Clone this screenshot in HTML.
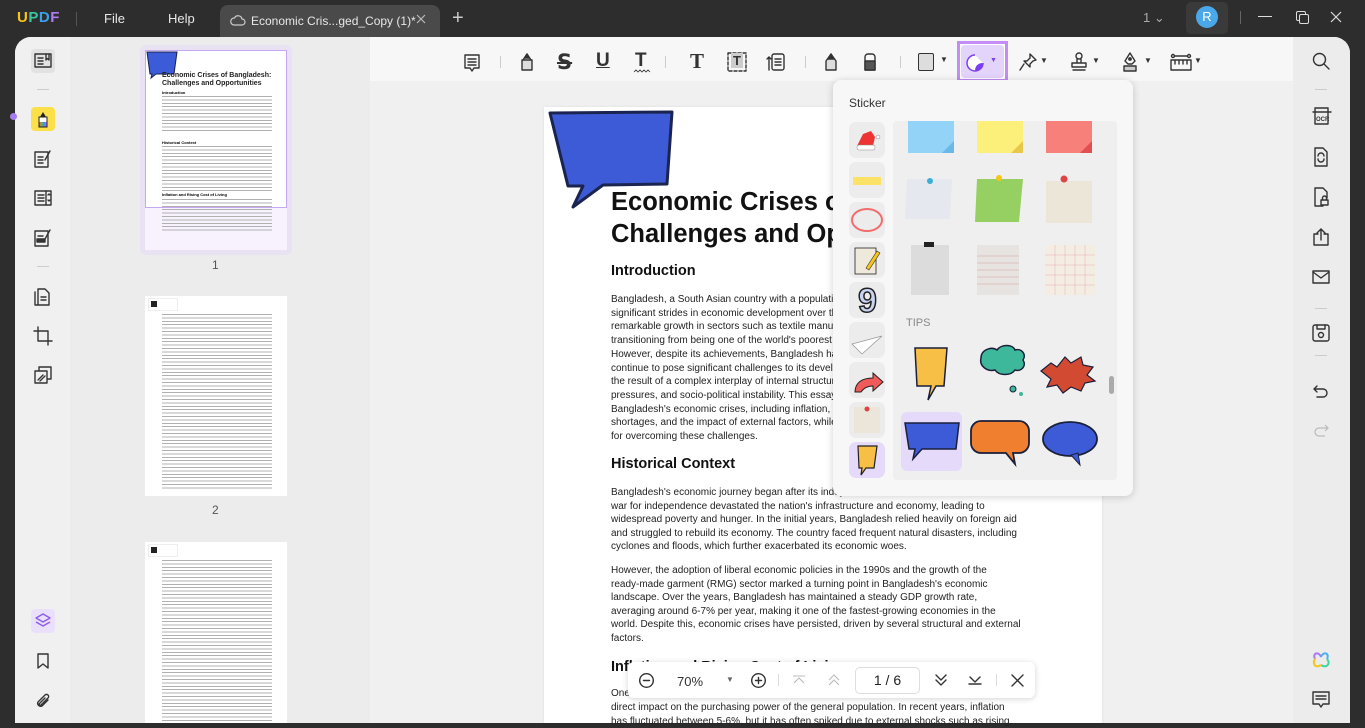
<!DOCTYPE html>
<html><head><meta charset="utf-8">
<style>
*{margin:0;padding:0;box-sizing:border-box}
body{width:1365px;height:723px;overflow:hidden;background:#2d2d2d;font-family:"Liberation Sans",Arial,sans-serif;position:relative}
.abs{position:absolute}
.title{color:#e8e8e8;font-size:13px}
svg{position:absolute;overflow:visible}
.ic{stroke:#333;fill:none;stroke-width:1.4;stroke-linecap:round;stroke-linejoin:round}
.pg{position:absolute;background:#fff}
.line{white-space:nowrap;font-size:10px;color:#222;position:absolute;left:611px;line-height:12px}
.h{position:absolute;left:611px;font-weight:bold;color:#111;white-space:nowrap}
.sb{position:absolute;left:849px;width:36px;height:36px;border-radius:7px;background:#ececec}
.tl{position:absolute;background:repeating-linear-gradient(#b0b0b0 0 1px,transparent 1px 3.4px)}
</style></head><body>
<!-- title bar -->
<div class="abs" style="left:17px;top:9px;font-weight:bold;font-size:15px;letter-spacing:.5px"><span style="color:#f5c518">U</span><span style="color:#3cc6a0">P</span><span style="color:#3aa0f0">D</span><span style="color:#b07cf0">F</span></div>
<div class="abs" style="left:76px;top:12px;width:1px;height:14px;background:#555"></div>
<div class="abs title" style="left:104px;top:11px">File</div>
<div class="abs title" style="left:168px;top:11px">Help</div>
<div class="abs" style="left:220px;top:5px;width:220px;height:32px;background:#4a4a4a;border-radius:8px 8px 0 0"></div>
<svg style="left:231px;top:14px" width="14" height="12"><path d="M3 11h8a3 3 0 0 0 0-6 4 4 0 0 0-7.5-1A3.5 3.5 0 0 0 3 11z" stroke="#ccc" fill="none" stroke-width="1.2"/></svg>
<div class="abs title" style="left:251px;top:14px;font-size:12px">Economic Cris...ged_Copy (1)*</div>
<svg style="left:416px;top:14px" width="10" height="10"><path d="M1 1l8 8M9 1L1 9" stroke="#bbb" stroke-width="1.2"/></svg>
<div class="abs title" style="left:452px;top:7px;font-size:20px;color:#ccc">+</div>
<div class="abs title" style="left:1143px;top:10px;color:#aaa">1 ⌄</div>
<div class="abs" style="left:1186px;top:2px;width:42px;height:32px;background:#3a3a3a;border-radius:5px"></div>
<div class="abs" style="left:1196px;top:6px;width:22px;height:22px;border-radius:50%;background:#4aa8e8;color:#fff;font-size:13px;text-align:center;line-height:22px">R</div>
<div class="abs" style="left:1240px;top:11px;width:1px;height:13px;background:#666"></div>
<div class="abs" style="left:1258px;top:16px;width:14px;height:1px;background:#ddd"></div>
<div class="abs" style="left:1296px;top:11px;width:10px;height:10px;border:1.2px solid #ddd;border-radius:2px"></div>
<div class="abs" style="left:1299px;top:14px;width:10px;height:10px;border:1.2px solid #ddd;border-radius:2px;background:#2d2d2d"></div>
<svg style="left:1330px;top:11px" width="12" height="12"><path d="M1 1l10 10M11 1L1 11" stroke="#ddd" stroke-width="1.2"/></svg>

<!-- app -->
<div class="abs" style="left:15px;top:37px;width:1335px;height:686px;background:#f7f7f7;border-radius:16px 16px 0 0;overflow:hidden">
  <div class="abs" style="left:0;top:0;width:55px;height:686px;background:#f0f0f0"></div>
  <div class="abs" style="left:55px;top:0;width:300px;height:686px;background:#ececec"></div>
  <div class="abs" style="left:355px;top:44px;width:923px;height:642px;background:#f0f0f0"></div>
  <div class="abs" style="left:1278px;top:0;width:57px;height:686px;background:#ececec"></div>
</div>
<div class="abs" style="left:10px;top:113px;width:7px;height:7px;border-radius:50%;background:#a77cf0"></div>

<!-- left sidebar icons -->
<div class="abs" style="left:31px;top:49px;width:24px;height:24px;border-radius:4px;background:#e2e2e2"></div>
<svg style="left:34px;top:52px" width="18" height="18" class="ic"><rect x="1" y="2" width="16" height="13"/><path d="M4 6h5M4 9h5M4 12h5M12 2v6l1.5-1.5L15 8V2"/></svg>
<div class="abs" style="left:37px;top:89px;width:12px;height:1px;background:#ccc"></div>
<div class="abs" style="left:31px;top:107px;width:24px;height:24px;border-radius:4px;background:#fbe04a"></div>
<svg style="left:35px;top:110px" width="16" height="18"><path d="M5 7l3-5 3 5z" fill="#222"/><rect x="4" y="7" width="8" height="10" fill="#fff" stroke="#222"/><rect x="4.5" y="12" width="7" height="4.5" fill="url(#rb)"/><defs><linearGradient id="rb"><stop offset="0" stop-color="#f55"/><stop offset=".33" stop-color="#4c4"/><stop offset=".66" stop-color="#48f"/><stop offset="1" stop-color="#c6f"/></linearGradient></defs></svg>
<svg style="left:34px;top:150px" width="18" height="18" class="ic"><rect x="1" y="2" width="13" height="15"/><path d="M4 7h5M4 10h5M4 13h5M16 1l-5 9"/></svg>
<svg style="left:34px;top:189px" width="18" height="18" class="ic"><rect x="1" y="2" width="16" height="14"/><path d="M4 6h6M4 9h6M4 12h6M12 2v14M14 6l1-1 1 1M14 11l1 1 1-1"/></svg>
<svg style="left:34px;top:229px" width="18" height="18" class="ic"><rect x="1" y="2" width="13" height="15"/><path d="M4 7h5M16 1l-5 9"/><rect x="3" y="10" width="8" height="3" fill="#333"/></svg>
<div class="abs" style="left:37px;top:266px;width:12px;height:1px;background:#ccc"></div>
<svg style="left:34px;top:288px" width="18" height="18" class="ic"><path d="M4 1h7l4 4v12H4zM1 4v13h3"/><path d="M7 9h5M7 12h5"/></svg>
<svg style="left:34px;top:327px" width="18" height="18" class="ic"><path d="M4 0v14h14M0 4h14v14"/></svg>
<svg style="left:34px;top:366px" width="18" height="18" class="ic"><rect x="5" y="1" width="12" height="12"/><rect x="1" y="5" width="12" height="12" fill="#f0f0f0"/><path d="M4 14l5-5M6 15l5-5"/></svg>
<div class="abs" style="left:31px;top:609px;width:24px;height:24px;border-radius:4px;background:#ebe0fb"></div>
<svg style="left:34px;top:612px" width="18" height="18" fill="none" stroke="#8a5cf0" stroke-width="1.4" stroke-linejoin="round"><path d="M9 2l7 4-7 4-7-4zM2 10l7 4 7-4"/></svg>
<svg style="left:36px;top:653px" width="14" height="16" class="ic"><path d="M2 1h10v14l-5-4-5 4z"/></svg>
<svg style="left:35px;top:692px" width="16" height="18" class="ic"><path d="M13 8l-6 6a3 3 0 0 1-4-4l7-7a2 2 0 0 1 3 3l-7 7a1 1 0 0 1-1.5-1.5L10 6"/></svg>

<!-- thumbnails -->
<div class="abs" style="left:140px;top:45px;width:152px;height:210px;background:#e8e2f3;border-radius:6px"></div>
<div class="pg" style="left:145px;top:50px;width:142px;height:200px;background:#f7f2fe"></div>
<div class="pg" style="left:145px;top:50px;width:142px;height:158px;border:1px solid #c7a8f5"></div>
<svg style="left:146px;top:51px" width="34" height="26"><path d="M1 1h30l-3 22H10l-5 4 1-4H4z" fill="#3b5bd8" stroke="#1a2050" stroke-width="1"/></svg>
<div class="abs" style="left:162px;top:72px;font-size:7px;font-weight:bold;color:#222;line-height:8px">Economic Crises of Bangladesh:<br>Challenges and Opportunities</div>
<div class="abs" style="left:162px;top:90px;font-size:4px;font-weight:bold">Introduction</div>
<div class="tl" style="left:162px;top:96px;width:110px;height:37px"></div>
<div class="abs" style="left:162px;top:140px;font-size:4px;font-weight:bold">Historical Context</div>
<div class="tl" style="left:162px;top:146px;width:110px;height:45px"></div>
<div class="abs" style="left:162px;top:192px;font-size:4px;font-weight:bold">Inflation and Rising Cost of Living</div>
<div class="tl" style="left:162px;top:199px;width:110px;height:32px"></div>
<div class="abs" style="left:212px;top:258px;font-size:12px;color:#555">1</div>
<div class="pg" style="left:145px;top:296px;width:142px;height:200px"></div>
<div class="abs" style="left:148px;top:298px;width:30px;height:13px;border:1px solid #eee"></div>
<div class="abs" style="left:151px;top:301px;width:6px;height:6px;background:#222"></div>
<div class="tl" style="left:162px;top:314px;width:110px;height:175px"></div>
<div class="abs" style="left:212px;top:503px;font-size:12px;color:#555">2</div>
<div class="pg" style="left:145px;top:542px;width:142px;height:181px"></div>
<div class="abs" style="left:148px;top:544px;width:30px;height:13px;border:1px solid #eee"></div>
<div class="abs" style="left:151px;top:547px;width:6px;height:6px;background:#222"></div>
<div class="tl" style="left:162px;top:560px;width:110px;height:163px"></div>

<!-- toolbar -->
<svg style="left:463px;top:53px" width="18" height="20" class="ic"><path d="M2 2h14v13h-5l-2 3-2-3H2z"/><path d="M5 6h8M5 9h8M5 12h8"/></svg>
<div class="abs" style="left:500px;top:56px;width:1px;height:12px;background:#ccc"></div>
<svg style="left:519px;top:52px" width="16" height="20" class="ic"><path d="M4 8l4-6 4 6"/><path d="M3 8h10v10H3z" fill="#ddd"/><path d="M5.5 6L8 2l2.5 4z" fill="#333"/></svg>
<div class="abs" style="left:557px;top:50px;font-size:21px;font-weight:bold;color:#333;text-decoration:line-through;font-family:'DejaVu Sans',sans-serif">S</div>
<div class="abs" style="left:596px;top:50px;font-size:19px;font-weight:bold;color:#333;text-decoration:underline">U</div>
<div class="abs" style="left:635px;top:50px;font-size:19px;font-weight:bold;color:#333">T</div>
<svg style="left:634px;top:70px" width="16" height="3"><path d="M0 2l2-2 2 2 2-2 2 2 2-2 2 2 2-2 2 2" stroke="#333" fill="none" stroke-width=".8"/></svg>
<div class="abs" style="left:665px;top:56px;width:1px;height:12px;background:#ccc"></div>
<div class="abs" style="left:690px;top:49px;font-size:21px;font-weight:bold;color:#333;font-family:'Liberation Serif',serif">T</div>
<svg style="left:727px;top:52px" width="20" height="20" class="ic" stroke-dasharray="3 2"><rect x="1" y="1" width="18" height="18"/></svg>
<div class="abs" style="left:731px;top:53px;width:12px;height:15px;background:#ccc;font-size:13px;font-weight:bold;text-align:center;color:#333;line-height:15px">T</div>
<svg style="left:766px;top:52px" width="20" height="20" class="ic"><rect x="6" y="2" width="12" height="16" rx="2"/><path d="M9 7h6M9 10h6M9 13h6M3 18V5M1 7l2-2 2 2"/></svg>
<div class="abs" style="left:805px;top:56px;width:1px;height:12px;background:#ccc"></div>
<svg style="left:823px;top:52px" width="16" height="20" class="ic"><path d="M3 18V9l5-7 5 7v9z" fill="#ddd"/><path d="M5 7l3-5 3 5z" fill="#333"/></svg>
<svg style="left:862px;top:52px" width="16" height="20" class="ic"><path d="M3 18V5a3 3 0 0 1 3-3h4a3 3 0 0 1 3 3v13z"/><path d="M3 9h10v9H3z" fill="#555"/></svg>
<div class="abs" style="left:900px;top:56px;width:1px;height:12px;background:#ccc"></div>
<div class="abs" style="left:918px;top:53px;width:16px;height:18px;border:1.4px solid #333;border-radius:2px;background:#ddd"></div>
<div class="abs" style="left:940px;top:55px;font-size:8px;color:#333">▼</div>
<div class="abs" style="left:957px;top:41px;width:51px;height:41px;border:3px solid #c38cf7;background:#fff"></div>
<div class="abs" style="left:961px;top:45px;width:43px;height:33px;background:#e3d4fb;border-radius:4px"></div>
<svg style="left:965px;top:53px" width="20" height="20"><path d="M10 2a8 8 0 1 0 8 8" fill="#fff" stroke="#7a3ef0" stroke-width="1.5"/><path d="M18 10a8 8 0 0 1-8 8c0-5 3-8 8-8z" fill="#7a3ef0"/></svg>
<div class="abs" style="left:990px;top:57px;font-size:7px;color:#7a3ef0">▼</div>
<svg style="left:1019px;top:53px" width="18" height="18" class="ic"><path d="M11 1l6 6-3 1-3 3 0 3-6-6 3 0 3-3zM5 11l-4 6"/></svg>
<div class="abs" style="left:1040px;top:56px;font-size:8px;color:#333">▼</div>
<svg style="left:1070px;top:52px" width="18" height="20" class="ic"><circle cx="9" cy="4" r="3"/><path d="M7 7v4M11 7v4M2 11h14v4H2zM3 18h12"/></svg>
<div class="abs" style="left:1092px;top:56px;font-size:8px;color:#333">▼</div>
<svg style="left:1121px;top:52px" width="18" height="20" class="ic"><path d="M9 1l5 8-3 3H7L4 9z"/><circle cx="9" cy="7" r="1.2" fill="#333"/><path d="M3 14h12v5H3z" fill="#ccc"/></svg>
<div class="abs" style="left:1144px;top:56px;font-size:8px;color:#333">▼</div>
<svg style="left:1170px;top:53px" width="22" height="18" class="ic"><circle cx="3" cy="3" r="1.5"/><circle cx="19" cy="3" r="1.5"/><path d="M4.5 3h13M1 7h20v10H1zM5 7v4M9 7v4M13 7v4M17 7v4"/></svg>
<div class="abs" style="left:1194px;top:56px;font-size:8px;color:#333">▼</div>

<!-- right sidebar icons -->
<svg style="left:1312px;top:52px" width="18" height="18" class="ic"><circle cx="7.5" cy="7.5" r="6"/><path d="M12 12l5 5"/></svg>
<div class="abs" style="left:1315px;top:89px;width:12px;height:1px;background:#ccc"></div>
<svg style="left:1312px;top:106px" width="20" height="22" class="ic" stroke-width="1.2"><path d="M3 6V2h13v4M1 6h18M3 6v12h13V6"/><text x="4" y="15" font-size="6" font-family="Liberation Sans" fill="#333" stroke="none" font-weight="bold">OCR</text></svg>
<svg style="left:1313px;top:147px" width="16" height="20" class="ic" stroke-width="1.2"><path d="M2 1h8l4 4v14H2z"/><path d="M5 9a3 3 0 0 1 6 0M11 12a3 3 0 0 1-6 0"/></svg>
<svg style="left:1313px;top:187px" width="16" height="20" class="ic" stroke-width="1.2"><path d="M10 19H2V1h8l4 4v6"/><rect x="8" y="13" width="7" height="5"/><path d="M9.5 13v-2a2 2 0 0 1 4 0v2"/></svg>
<svg style="left:1312px;top:228px" width="18" height="18" class="ic" stroke-width="1.2"><path d="M6 6H2v11h14V6h-4M9 12V1M5 5l4-4 4 4"/></svg>
<svg style="left:1312px;top:269px" width="18" height="16" class="ic" stroke-width="1.2"><rect x="1" y="2" width="16" height="12"/><path d="M1 3l8 6 8-6"/></svg>
<div class="abs" style="left:1315px;top:308px;width:12px;height:1px;background:#ccc"></div>
<svg style="left:1312px;top:324px" width="18" height="18" class="ic" stroke-width="1.2"><rect x="1" y="1" width="16" height="16" rx="2"/><path d="M5 1v4h8V1"/><circle cx="9" cy="11" r="2.5"/></svg>
<div class="abs" style="left:1315px;top:355px;width:12px;height:1px;background:#ccc"></div>
<svg style="left:1313px;top:385px" width="16" height="14" class="ic" stroke-width="1.2"><path d="M4 1L1 4l3 3M1 4h9a4 4 0 0 1 0 8H4"/></svg>
<svg style="left:1313px;top:424px" width="16" height="14" fill="none" stroke="#bbb" stroke-width="1.2"><path d="M12 1l3 3-3 3M15 4H6a4 4 0 0 0 0 8h6"/></svg>
<svg style="left:1312px;top:652px" width="18" height="18" fill="none" stroke-width="2"><path d="M9 5C7-1 0 1 3 7" stroke="#a77cf0"/><path d="M9 5c2-6 9-4 6 2" stroke="#4ab0f0"/><path d="M15 7c4 4 0 10-6 6" stroke="#3cd6a0"/><path d="M9 13c-6 4-9-2-6-6" stroke="#f5c518"/></svg>
<svg style="left:1312px;top:691px" width="18" height="18" class="ic" stroke-width="1.2"><path d="M1 1h16v12h-6l-2 3-2-3H1z"/><path d="M4 5h10M4 8h10"/></svg>

<!-- document page -->
<div class="pg" style="left:544px;top:107px;width:558px;height:616px;box-shadow:0 0 3px rgba(0,0,0,.08)"></div>
<div class="h" style="top:186px;font-size:25.5px;line-height:32px">Economic Crises of Bangladesh:<br>Challenges and Opportunities</div>
<svg style="left:545px;top:107px" width="130" height="105"><path d="M5 6L127 5 122 77 58 78 28 100 38 79 23 79z" fill="#3d5bd6" stroke="#1b2450" stroke-width="3" stroke-linejoin="round"/></svg>
<div class="h" style="top:263px;font-size:14.5px">Introduction</div>
<div class="line" style="top:294px">Bangladesh, a South Asian country with a population of over 160 million, has made</div>
<div class="line" style="top:307.7px">significant strides in economic development over the past few decades. It has experienced</div>
<div class="line" style="top:321.4px">remarkable growth in sectors such as textile manufacturing, remittances, and agriculture,</div>
<div class="line" style="top:335.1px">transitioning from being one of the world's poorest nations to an emerging market economy.</div>
<div class="line" style="top:348.8px">However, despite its achievements, Bangladesh has faced numerous economic crises that</div>
<div class="line" style="top:362.5px">continue to pose significant challenges to its development trajectory. These crises are often</div>
<div class="line" style="top:376.2px">the result of a complex interplay of internal structural weaknesses, global economic</div>
<div class="line" style="top:389.9px">pressures, and socio-political instability. This essay explores the various dimensions of</div>
<div class="line" style="top:403.6px">Bangladesh's economic crises, including inflation, unemployment, trade imbalances, energy</div>
<div class="line" style="top:417.3px">shortages, and the impact of external factors, while also highlighting potential opportunities</div>
<div class="line" style="top:431px">for overcoming these challenges.</div>
<div class="h" style="top:456px;font-size:14.5px">Historical Context</div>
<div class="line" style="top:487px">Bangladesh's economic journey began after its independence from Pakistan in 1971. The</div>
<div class="line" style="top:500.6px">war for independence devastated the nation's infrastructure and economy, leading to</div>
<div class="line" style="top:514.2px">widespread poverty and hunger. In the initial years, Bangladesh relied heavily on foreign aid</div>
<div class="line" style="top:527.8px">and struggled to rebuild its economy. The country faced frequent natural disasters, including</div>
<div class="line" style="top:541.4px">cyclones and floods, which further exacerbated its economic woes.</div>
<div class="line" style="top:565px">However, the adoption of liberal economic policies in the 1990s and the growth of the</div>
<div class="line" style="top:578.6px">ready-made garment (RMG) sector marked a turning point in Bangladesh's economic</div>
<div class="line" style="top:592.2px">landscape. Over the years, Bangladesh has maintained a steady GDP growth rate,</div>
<div class="line" style="top:605.8px">averaging around 6-7% per year, making it one of the fastest-growing economies in the</div>
<div class="line" style="top:619.4px">world. Despite this, economic crises have persisted, driven by several structural and external</div>
<div class="line" style="top:633px">factors.</div>
<div class="h" style="top:659px;font-size:14.5px">Inflation and Rising Cost of Living</div>
<div class="line" style="top:688px">One of the most significant economic challenges Bangladesh faces is inflation, which has a</div>
<div class="line" style="top:702px">direct impact on the purchasing power of the general population. In recent years, inflation</div>
<div class="line" style="top:716px">has fluctuated between 5-6%, but it has often spiked due to external shocks such as rising</div>

<!-- zoom bar -->
<div class="abs" style="left:628px;top:662px;width:407px;height:36px;background:#fff;border-radius:6px;box-shadow:0 1px 6px rgba(0,0,0,.18)"></div>
<svg style="left:639px;top:673px" width="15" height="15" class="ic" stroke-width="1.1"><circle cx="7.5" cy="7.5" r="6.8"/><path d="M4.5 7.5h6"/></svg>
<div class="abs" style="left:677px;top:674px;font-size:13px;color:#333">70%</div>
<div class="abs" style="left:726px;top:675px;font-size:8px;color:#666">▼</div>
<svg style="left:751px;top:673px" width="15" height="15" class="ic" stroke-width="1.1"><circle cx="7.5" cy="7.5" r="6.8"/><path d="M4.5 7.5h6M7.5 4.5v6"/></svg>
<div class="abs" style="left:778px;top:674px;width:1px;height:12px;background:#ddd"></div>
<svg style="left:792px;top:675px" width="14" height="10" fill="none" stroke="#bbb" stroke-width="1.1"><path d="M1 1h12M2 8l5-5 5 5"/></svg>
<svg style="left:827px;top:674px" width="14" height="12" fill="none" stroke="#bbb" stroke-width="1.1"><path d="M2 6l5-5 5 5M2 11l5-5 5 5"/></svg>
<div class="abs" style="left:855px;top:667px;width:65px;height:27px;border:1px solid #ddd;border-radius:5px;font-size:14px;color:#222;text-align:center;line-height:25px">1 / 6</div>
<svg style="left:934px;top:674px" width="14" height="12" class="ic" stroke-width="1.1"><path d="M2 1l5 5 5-5M2 6l5 5 5-5"/></svg>
<svg style="left:968px;top:675px" width="14" height="10" class="ic" stroke-width="1.1"><path d="M2 2l5 5 5-5M1 9h12"/></svg>
<div class="abs" style="left:996px;top:674px;width:1px;height:12px;background:#ddd"></div>
<svg style="left:1011px;top:674px" width="13" height="13" class="ic" stroke-width="1.2"><path d="M1 1l11 11M12 1L1 12"/></svg>

<!-- sticker panel -->
<div class="abs" style="left:833px;top:80px;width:300px;height:416px;background:#f7f7f7;border-radius:8px;box-shadow:0 1px 8px rgba(0,0,0,.18)"></div>
<div class="abs" style="left:849px;top:96px;font-size:12px;color:#333">Sticker</div>
<div class="sb" style="top:122px"></div><div class="sb" style="top:162px"></div><div class="sb" style="top:202px"></div><div class="sb" style="top:242px"></div><div class="sb" style="top:282px"></div><div class="sb" style="top:322px"></div><div class="sb" style="top:362px"></div><div class="sb" style="top:402px"></div><div class="sb" style="top:442px;background:#e6dafb"></div>
<svg style="left:849px;top:122px" width="36" height="360">
 <path d="M8 24l6-12 8-3 4 6-2 9z" fill="#e33"/><rect x="8" y="23" width="18" height="5" rx="2" fill="#fff" stroke="#888" stroke-width=".5"/><circle cx="29" cy="15" r="2" fill="#fff" stroke="#888" stroke-width=".5"/>
 <rect x="4" y="55" width="28" height="8" fill="#fde268"/>
 <ellipse cx="18" cy="98" rx="15" ry="11" fill="none" stroke="#f46c6c" stroke-width="2"/>
 <rect x="6" y="126" width="21" height="26" fill="#efe9dc" stroke="#222" stroke-width=".8"/><path d="M17 146l11-17 3 2-11 17z" fill="#f5c518" stroke="#333" stroke-width=".6"/>
 <text x="9" y="190" font-size="34" font-family="Liberation Sans" fill="#c8d4f0" stroke="#222" stroke-width="1.5" font-weight="bold">9</text>
 <path d="M3 222l30-8-20 18z" fill="#fff" stroke="#999" stroke-width=".8"/>
 <path d="M6 270c0-10 8-14 18-14v-5l10 9-10 9v-5c-6 0-10 3-12 6z" fill="#f05a5a" stroke="#222" stroke-width="1"/>
 <rect x="5" y="285" width="26" height="26" fill="#ece6da"/><circle cx="18" cy="287" r="2.5" fill="#d44"/>
 <path d="M9 324h19l-3 22h-8l-5 7 1-7h-3z" fill="#f7bf45" stroke="#222" stroke-width="1.2"/>
</svg>
<div class="abs" style="left:893px;top:121px;width:224px;height:359px;background:#efefef;border-radius:4px;overflow:hidden">
 <svg style="left:0;top:0" width="224" height="359">
  <rect x="15" y="0" width="46" height="32" fill="#93d3f7"/><path d="M49 32l12-12v12z" fill="#6ab8e8"/>
  <rect x="84" y="0" width="46" height="32" fill="#fdf07a"/><path d="M118 32l12-12v12z" fill="#e8c84a"/>
  <rect x="153" y="0" width="46" height="32" fill="#f8807a"/><path d="M187 32l12-12v12z" fill="#e05050"/>
  <path d="M14 58h45l-2 40H12z" fill="#e5e8ee"/><circle cx="37" cy="60" r="3" fill="#3ab0d8"/>
  <path d="M84 58h46l-4 43H82z" fill="#96d062"/><circle cx="106" cy="57" r="3" fill="#f5c518"/>
  <rect x="153" y="60" width="46" height="42" fill="#ece6d8"/><circle cx="171" cy="58" r="3.5" fill="#d44"/>
  <rect x="18" y="124" width="38" height="50" fill="#dcdcdc"/><rect x="31" y="121" width="10" height="5" fill="#222"/>
  <rect x="84" y="124" width="42" height="50" fill="#e6e3e0"/><path d="M84 135h42M84 142h42M84 149h42M84 156h42M84 163h42" stroke="#d4a0a0" stroke-width=".5"/>
  <rect x="152" y="124" width="50" height="50" fill="#f4ede4"/><path d="M152 134h50M152 144h50M152 154h50M152 164h50M162 124v50M172 124v50M182 124v50M192 124v50" stroke="#e8b0b0" stroke-width=".5"/>
  <text x="13" y="205" font-size="11" font-family="Liberation Sans" fill="#888">TIPS</text>
  <path d="M22 227h32l-3 38H43l-8 14 3-14H24z" fill="#f7bf45" stroke="#1a1f3a" stroke-width="1.5"/>
  <path d="M88 237c0-8 10-12 16-8 4-6 16-6 18 0 6-2 12 4 8 10 4 6-2 12-8 10-4 6-16 6-20 0-8 2-16-4-14-12z" fill="#3db89a" stroke="#1a1f3a" stroke-width="1.5"/><circle cx="120" cy="268" r="3" fill="#3db89a" stroke="#1a1f3a"/><circle cx="128" cy="273" r="2" fill="#3db89a"/>
  <path d="M148 250l10-8 6 4 8-10 6 6 10-6 2 8 10 2-6 8 8 6-10 2-4 8-10-4-8 6-6-8-10 2 4-8z" fill="#d34a32" stroke="#1a1f3a" stroke-width="1.2"/>
  <rect x="8" y="291" width="61" height="59" rx="6" fill="#e6dafb"/>
  <path d="M12 302h54l-3 26H29l-9 10 2-10h-6z" fill="#3d5bd6" stroke="#1a1f3a" stroke-width="1.5"/>
  <path d="M88 300h38a10 10 0 0 1 10 10v12a10 10 0 0 1-10 10h-6l2 11-9-11H88a10 10 0 0 1-10-10v-12a10 10 0 0 1 10-10z" fill="#f08030" stroke="#1a1f3a" stroke-width="1.8"/>
  <ellipse cx="177" cy="318" rx="27" ry="17" fill="#3d5bd6" stroke="#1a1f3a" stroke-width="1.8"/><path d="M178 334l9 10-2-12z" fill="#3d5bd6" stroke="#1a1f3a" stroke-width="1"/>
 </svg>
</div>
<div class="abs" style="left:1109px;top:376px;width:5px;height:18px;border-radius:3px;background:#aaa"></div>
</body></html>
